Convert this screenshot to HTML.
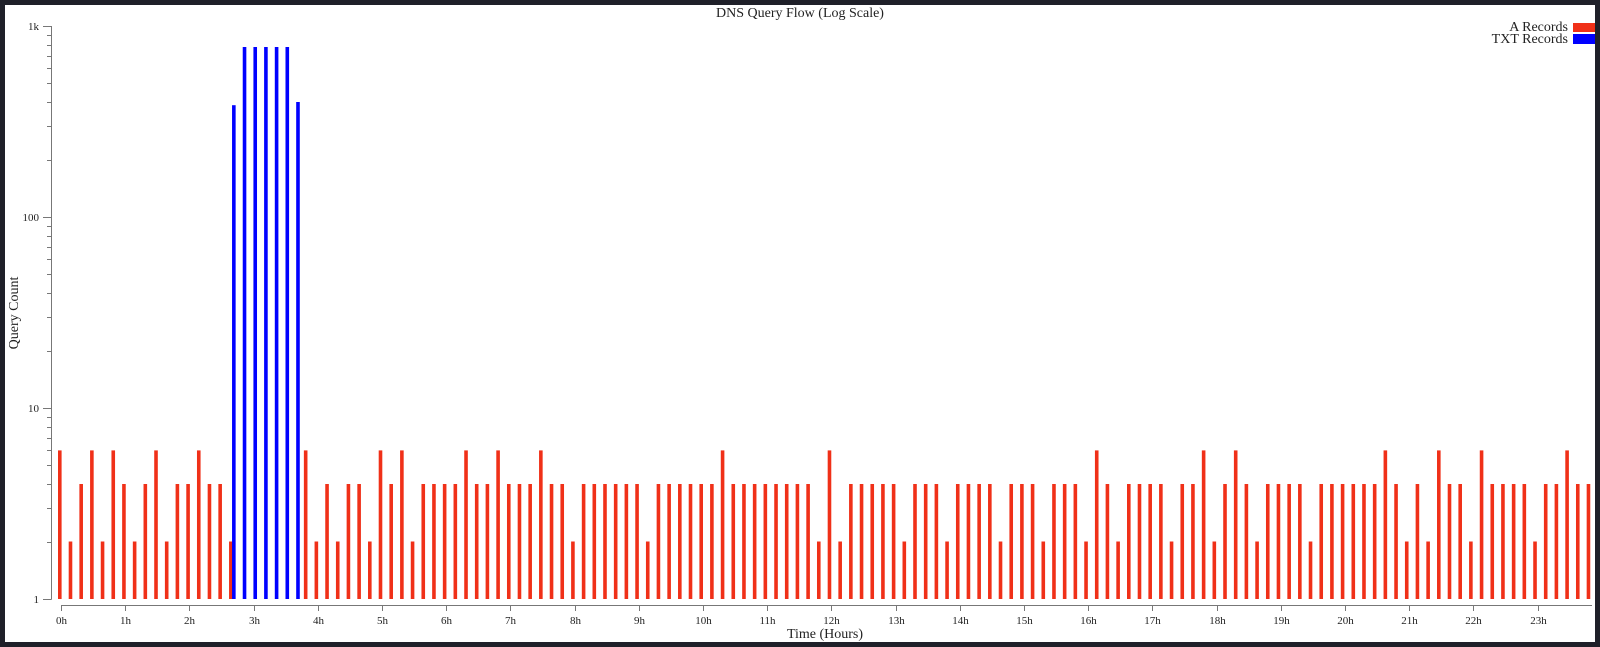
<!DOCTYPE html>
<html><head><meta charset="utf-8"><style>
html,body{margin:0;padding:0;background:#1f2029;width:1600px;height:647px;overflow:hidden}
svg{display:block}
text{font-family:"Liberation Serif",serif;fill:#222}
</style></head><body>
<svg id="s" width="1600" height="647" xmlns="http://www.w3.org/2000/svg">
<rect x="0" y="0" width="1600" height="647" fill="#1f2029"/>
<rect x="5" y="5" width="1590" height="637" fill="#fff"/>
<text x="800" y="17" text-anchor="middle" font-size="14">DNS Query Flow (Log Scale)</text>
<text x="1568" y="31" text-anchor="end" font-size="14">A Records</text>
<text x="1568" y="43" text-anchor="end" font-size="14">TXT Records</text>
<rect x="1573" y="23" width="22" height="9" fill="#f03018"/>
<rect x="1573" y="34" width="22" height="10" fill="#0000ff"/>
<text x="825" y="638" text-anchor="middle" font-size="14">Time (Hours)</text>
<text transform="translate(18,313) rotate(-90)" text-anchor="middle" font-size="14">Query Count</text>
<g id="ax" stroke="#777" stroke-width="1" fill="none"></g>
<g id="lb" font-size="11"></g>
<g id="bars"></g>
</svg>
<script>
var NS="http://www.w3.org/2000/svg";
function el(p,t,a,txt){var e=document.createElementNS(NS,t);for(var k in a)e.setAttribute(k,a[k]);if(txt!=null)e.textContent=txt;p.appendChild(e);return e;}
var ax=document.getElementById('ax'),lb=document.getElementById('lb'),bars=document.getElementById('bars');
function Y(v){return 599-191*Math.log10(v);}
el(ax,'path',{d:'M51.5,26V599.5'});
for(var d=0;d<3;d++){for(var m=1;m<10;m++){var v=Math.pow(10,d)*m;var y=Math.round(Y(v))+0.5;el(ax,'path',{d:'M'+(m==1?43:47)+','+y+'H51.5'});}}
el(ax,'path',{d:'M43,26.5H51.5'});
[['1',599],['10',408],['100',217],['1k',26]].forEach(function(a){el(lb,'text',{x:39,y:a[1]+4,'text-anchor':'end'},a[0]);});
el(ax,'path',{d:'M61.5,611V605.5H1592'});
for(var h=0;h<24;h++){var x=Math.round(61+h*64.2)+0.5;el(ax,'path',{d:'M'+x+',605.5V611'});el(lb,'text',{x:x,y:624,'text-anchor':'middle'},h+'h');}
var pre=[6,2,4,6,2,6,4,2,4,6,2,4,4,6,4,4,2];
var post=[6,2,4,2,4,4,2,6,4,6, 2,4,4,4,4,6,4,4,6,4, 4,4,6,4,4,2,4,4,4,4, 4,4,2,4,4,4,4,4,4,6, 4,4,4,4,4,4,4,4,2,6, 2,4,4,4,4,4,2,4,4,4, 2,4,4,4,4,2,4,4,4,2, 4,4,4,2,6,4,2,4,4,4, 4,2,4,4,6,2,4,6,4,2, 4,4,4,4,2,4,4,4,4,4, 4,6,4,2,4,2,6,4,4,2, 6,4,4,4,4,2,4,4,6,4, 4];
function bar(i,v,c,off){var x=58+i*10.69+off;var y=Y(v);el(bars,'rect',{x:x.toFixed(2),y:y.toFixed(1),width:3.6,height:(599-y).toFixed(1),fill:c});}
pre.forEach(function(v,i){bar(i,v,'#f03018',0);});
post.forEach(function(v,i){bar(23+i,v,'#f03018',0);});
var blue=[385,776,776,776,776,776,400];
blue.forEach(function(v,i){bar(16+i,v,'#0000ff',3);});
</script>
</body></html>
